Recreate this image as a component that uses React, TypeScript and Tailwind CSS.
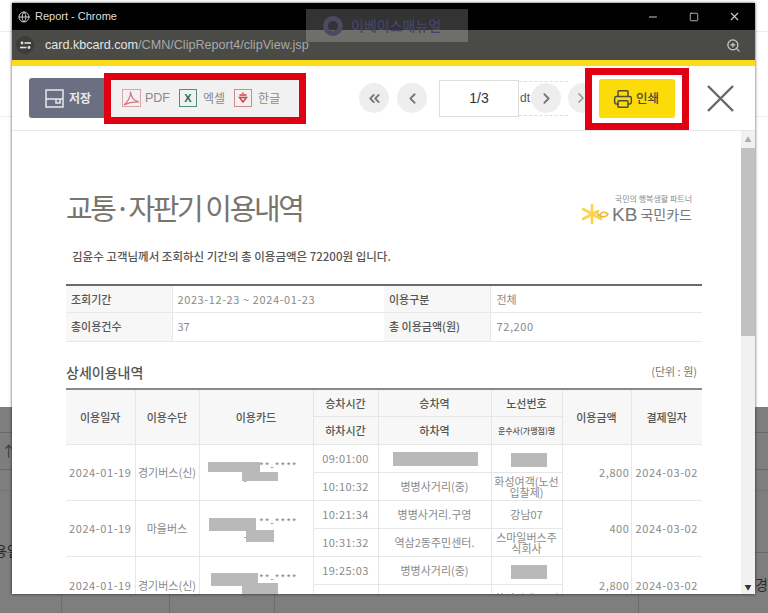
import { Fragment, type ReactNode } from 'react';
import { Printer, Minus, Square, X, Globe, ZoomIn, ChevronLeft, ChevronRight, ChevronsLeft } from 'lucide-react';

function Bar({ className }: { className: string }) {
  return <div className={`absolute bg-[#b9b9b9] ${className}`} />;
}

function HeadCell({ children, className = '', rowSpan }: { children: ReactNode; className?: string; rowSpan?: number }) {
  return (
    <td rowSpan={rowSpan} className={`border-l border-[#e6e6e6] bg-[#f7f7f7] text-center text-[11px] font-medium text-[#555] ${className}`}>
      {children}
    </td>
  );
}

function Cell({ children, className = '', rowSpan }: { children?: ReactNode; className?: string; rowSpan?: number }) {
  return (
    <td rowSpan={rowSpan} className={`relative border-l border-t border-[#e6e6e6] text-center text-[11px] text-[#8a8a8a] ${className}`}>
      {children}
    </td>
  );
}

const rows = [
  { date: '2024-01-19', kind: '경기버스(신)', on: '09:01:00', off: '10:10:32', st1: '', st2: '병병사거리(중)', no: '', co: '화성여객(노선입찰제)', amt: '2,800', pay: '2024-03-02', card: 0 },
  { date: '2024-01-19', kind: '마을버스', on: '10:21:34', off: '10:31:32', st1: '병병사거리.구영', st2: '역삼2동주민센터.', no: '강남07', co: '스마일버스주식회사', amt: '400', pay: '2024-03-02', card: 1 },
  { date: '2024-01-19', kind: '경기버스(신)', on: '19:25:03', off: '', st1: '병병사거리(중)', st2: '', no: '', co: '화성여객(노선', amt: '2,800', pay: '2024-03-02', card: 2 },
];

function Circle({ children }: { children: ReactNode }) {
  return (
    <div className="flex h-[30px] w-[30px] shrink-0 items-center justify-center rounded-full bg-[#eee] text-[#777]">
      {children}
    </div>
  );
}

export default function App() {
  return (
    <div className="relative h-[613px] w-[768px] overflow-hidden bg-[#7e7e7e] font-['Noto_Sans_CJK_KR','Liberation_Sans',sans-serif]">
      {/* 뒤 페이지 */}
      <div className="h-[407px] bg-white">
        <div className="h-[32px] border-b border-[#eee]" />
        <div className="h-[85px] border-b border-[#eee]" />
      </div>
      <div className="h-[26px] border-b border-[#686868]" />
      <div className="h-[37px] border-b border-[#686868] pl-[1px] text-[15px] leading-[36px] text-[#3a3a3a]">↑.</div>
      <div className="h-[21px] border-b border-[#747474]" />
      <div className="flex h-[62px] items-end border-b border-[#686868] pb-[2px] text-[14px] leading-[18px] text-[#2a2a2a]">
        <span className="-mb-[9px] -ml-[6px]">용일</span>
      </div>
      <div className="h-[41px] pt-[22px] pl-[755px] text-[14px] leading-[18px] text-[#2a2a2a]">경</div>
      <div className="grid h-[19px] grid-cols-[62px_108px_105px_364px_1fr]">
        <div className="border-r border-[#6c6c6c]" />
        <div className="border-r border-[#6c6c6c]" />
        <div className="border-r border-[#6c6c6c]" />
        <div className="border-r border-[#6c6c6c]" />
      </div>

      {/* 창 */}
      <div className="absolute left-[12px] top-[3px] flex h-[591px] w-[743px] flex-col overflow-hidden bg-white shadow-[0_0_3px_rgba(0,0,0,0.7)]">
        <div className="flex h-[27px] shrink-0 items-center bg-black pl-[6px] text-[#ddd]">
          <Globe size={12} className="text-[#ccc]" />
          <span className="ml-[5px] font-['Liberation_Sans'] text-[11px]">Report - Chrome</span>
          <div className="ml-auto flex items-center text-[#ccc]">
            <div className="flex w-[41px] justify-center"><Minus size={12} /></div>
            <div className="flex w-[41px] justify-center"><Square size={10} strokeWidth={2} /></div>
            <div className="flex w-[41px] justify-center"><X size={13} /></div>
          </div>
        </div>
        <div className="flex h-[30px] shrink-0 items-center bg-[#4a4a46] pl-[4px] pr-[14px]">
          <div className="flex h-[18px] w-[18px] items-center justify-center rounded-full bg-[#3c3c3a]">
            <svg width="11" height="9" viewBox="0 0 11 9" fill="#e0e0e0">
              <circle cx="2" cy="2" r="1.4" />
              <rect x="4.5" y="1.2" width="6.5" height="1.6" />
              <rect x="0" y="5.7" width="6.5" height="1.6" />
              <circle cx="9" cy="6.5" r="1.4" />
            </svg>
          </div>
          <span className="ml-[11px] font-['Liberation_Sans'] text-[12.6px] text-[#e4e4e4]">
            card.kbcard.com<span className="text-[#a8a8a8]">/CMN/ClipReport4/clipView.jsp</span>
          </span>
          <ZoomIn size={15} className="ml-auto text-[#ccc]" />
        </div>
        <div className="h-[6px] shrink-0 bg-[#fbdc1a]" />

        {/* 툴바 */}
        <div className="flex h-[65px] shrink-0 items-center border-b border-[#e8e8e8] pl-[17px]">
          <div className="flex h-[40px] w-[75px] items-center gap-[5px] rounded-l-[3px] bg-[#6a7082] pl-[16px] text-[#e8e8ec]">
            <svg width="19" height="19" viewBox="0 0 19 19" fill="none" stroke="currentColor" strokeWidth="1.5">
              <rect x="1" y="1" width="17" height="17" />
              <path d="M1 10H18M11 10V14H15V10" />
            </svg>
            <span className="text-[12px] font-bold">저장</span>
          </div>

          {/* 내보내기 */}
          <div className="flex h-[51px] w-[202px] shrink-0 items-center border-[7px] border-[#e00012] bg-[#f1f1f1] pl-[11px] text-[#8a8a8a]">
            <svg width="19" height="18" viewBox="0 0 19 18" fill="none">
              <rect x="0.5" y="0.5" width="18" height="17" stroke="#dba3aa" />
              <path d="M2 16C6 13 9 7 8.5 2.5C9 8 12 12 17 13C12 12.5 7 13.5 2 16Z" stroke="#d5727f" strokeWidth="1.2" />
            </svg>
            <span className="ml-[4px] font-['Liberation_Sans'] text-[12.5px]">PDF</span>
            <div className="ml-[9px] flex h-[18px] w-[18px] items-center justify-center border border-[#4f9077] font-['Liberation_Sans'] text-[11px] font-bold leading-none text-[#2f6a53]">X</div>
            <span className="ml-[6px] text-[12px]">엑셀</span>
            <svg className="ml-[9px]" width="18" height="18" viewBox="0 0 18 18" fill="none">
              <rect x="0.5" y="0.5" width="17" height="17" stroke="#c98a90" />
              <path d="M5.5 6H12.5M9 3.5V5M5.5 8.5H12.5L9 13Z" stroke="#d0404c" strokeWidth="1.4" />
            </svg>
            <span className="ml-[6px] text-[12px]">한글</span>
          </div>

          {/* 페이지 이동 */}
          <div className="ml-[53px]">
            <Circle><ChevronsLeft size={17} strokeWidth={2.6} /></Circle>
          </div>
          <div className="ml-[8px]">
            <Circle><ChevronLeft size={17} strokeWidth={2.6} /></Circle>
          </div>
          <div className="ml-[12px] flex h-[37px] w-[80px] shrink-0 items-center justify-center border border-[#ddd] font-['Liberation_Sans'] text-[14px] text-[#333]">
            1/3
          </div>
          <div className="relative flex items-center pr-[7px]">
            <div className="absolute inset-x-0 h-[35px] border-y border-dashed border-[#ddd]" />
            <span className="w-[12px] shrink-0 pl-[1px] font-['Liberation_Sans'] text-[12px] text-[#555]">dt</span>
            <Circle><ChevronRight size={17} strokeWidth={2.6} /></Circle>
          </div>
          <div className="flex h-[30px] w-[17px] shrink-0 items-center overflow-hidden rounded-l-full bg-[#eee] pl-[5px] text-[#999]">
            <ChevronRight size={16} strokeWidth={2.6} className="shrink-0" />
          </div>

          {/* 인쇄 */}
          <div className="mt-[1px] flex h-[62px] w-[104px] shrink-0 items-center border-[7px] border-[#e00012] bg-white pl-[7px]">
            <div className="flex h-[39px] w-[76px] items-center justify-center gap-[3px] rounded-[3px] bg-[#fbdc09] pr-[2px] text-[#4d4d3a]">
              <Printer size={20} strokeWidth={1.8} />
              <span className="text-[12.5px] font-medium">인쇄</span>
            </div>
          </div>
          <svg className="ml-[18px] shrink-0" width="27" height="27" viewBox="0 0 27 27" stroke="#666" strokeWidth="2.4">
            <path d="M1 1L26 26M26 1L1 26" />
          </svg>
        </div>

        {/* 본문 */}
        <div className="flex min-h-0 flex-1">
          <div className="min-w-0 flex-1 overflow-hidden pl-[54px]">
            <div className="w-[636px]">
              <div className="flex h-[100px] items-start justify-between">
                <h1 className="mt-[57px] whitespace-nowrap text-[29px] font-normal leading-[38px] tracking-[-2.4px] text-[#78746e]">교통·자판기 이용내역</h1>
                <div className="mr-[10px] mt-[63px] flex flex-col items-end">
                  <span className="text-[8px] leading-[10px] text-[#8a8a8a]">국민의 행복생활 파트너</span>
                  <div className="flex items-center gap-[3px]">
                    <svg width="27" height="20" viewBox="0 0 27 20">
                      <g stroke="#fbd34a" strokeWidth="2.6" fill="none" strokeLinecap="round">
                        <path d="M10 1 L10 19" />
                        <path d="M1 5 L19 15" />
                        <path d="M1 15 L16 7" />
                      </g>
                      <path d="M15 9 C18 14 24 14 26 10 C23 7 19 8 18 11" stroke="#e8b93a" strokeWidth="1.6" fill="none" />
                    </svg>
                    <span className="font-['Liberation_Sans'] text-[19px] leading-none text-[#777]">KB</span>
                    <span className="text-[14px] leading-none text-[#777]">국민카드</span>
                  </div>
                </div>
              </div>
              <p className="mt-[17px] pl-[6px] text-[11.5px] font-medium leading-[16px] text-[#555]">
                김윤수 고객님께서 조회하신 기간의 총 이용금액은 72200원 입니다.
              </p>

              {/* 조회 요약 */}
              <table className="mt-[20px] w-[636px] table-fixed border-t-2 border-[#6b6b6b] text-[11px]">
                <tbody>
                  <tr className="h-[27px] border-b border-[#e8e8e8]">
                    <td className="w-[106px] bg-[#f7f7f7] pl-[5px] font-medium text-[#555]">조회기간</td>
                    <td className="w-[212px] border-l border-[#e8e8e8] pl-[5px] tracking-[0.6px] text-[#8a8a8a]">2023-12-23 ~ 2024-01-23</td>
                    <td className="w-[106px] bg-[#f7f7f7] pl-[5px] font-medium text-[#555]">이용구분</td>
                    <td className="border-l border-[#e8e8e8] pl-[6px] text-[#8a8a8a]">전체</td>
                  </tr>
                  <tr className="h-[29px] border-b border-[#e8e8e8]">
                    <td className="bg-[#f7f7f7] pl-[5px] font-medium text-[#555]">총이용건수</td>
                    <td className="border-l border-[#e8e8e8] pl-[5px] text-[#8a8a8a]">37</td>
                    <td className="bg-[#f7f7f7] pl-[5px] font-medium text-[#555]">총 이용금액(원)</td>
                    <td className="border-l border-[#e8e8e8] pl-[6px] tracking-[0.6px] text-[#8a8a8a]">72,200</td>
                  </tr>
                </tbody>
              </table>

              <div className="mt-[20px] flex items-center justify-between pr-[5px]">
                <h2 className="text-[14px] font-medium leading-[20px] text-[#555]">상세이용내역</h2>
                <span className="text-[11px] text-[#777]">(단위 : 원)</span>
              </div>

              {/* 상세 이용내역 */}
              <table className="mt-[6px] w-[636px] table-fixed border-t-2 border-[#8a8a8a]">
                <colgroup>
                  <col className="w-[69px]" />
                  <col className="w-[64px]" />
                  <col className="w-[114px]" />
                  <col className="w-[65px]" />
                  <col className="w-[113px]" />
                  <col className="w-[71px]" />
                  <col className="w-[69px]" />
                  <col className="w-[71px]" />
                </colgroup>
                <tbody>
                  <tr className="h-[28px]">
                    <HeadCell className="!border-l-0" rowSpan={2}>이용일자</HeadCell>
                    <HeadCell rowSpan={2}>이용수단</HeadCell>
                    <HeadCell rowSpan={2}>이용카드</HeadCell>
                    <HeadCell>승차시간</HeadCell>
                    <HeadCell>승차역</HeadCell>
                    <HeadCell>노선번호</HeadCell>
                    <HeadCell rowSpan={2}>이용금액</HeadCell>
                    <HeadCell rowSpan={2}>결제일자</HeadCell>
                  </tr>
                  <tr className="h-[28px]">
                    <HeadCell className="border-t border-t-[#e6e6e6]">하차시간</HeadCell>
                    <HeadCell className="border-t border-t-[#e6e6e6]">하차역</HeadCell>
                    <HeadCell className="whitespace-nowrap border-t border-t-[#e6e6e6] !text-[8px]">운수사(가맹점)명</HeadCell>
                  </tr>
                  {rows.map((r, i) => (
                    <Fragment key={i}>
                      <tr className="h-[28px]">
                        <Cell className="!border-l-0 whitespace-nowrap tracking-[0.6px]" rowSpan={2}>{r.date}</Cell>
                        <Cell className="whitespace-nowrap" rowSpan={2}>{r.kind}</Cell>
                        <Cell rowSpan={2}>
                          <div className="absolute right-[15px] top-[16px] text-[10px] leading-none tracking-[1px]">**-****</div>
                          <div className="absolute left-[44px] top-[30px] text-[10px] leading-none tracking-[1px]">-****</div>
                          {r.card === 0 && <><Bar className="left-[8px] top-[17px] h-[10px] w-[52px]" /><Bar className="left-[42px] top-[27px] h-[9px] w-[36px]" /></>}
                          {r.card === 1 && <><Bar className="left-[9px] top-[17px] h-[13px] w-[47px]" /><Bar className="left-[46px] top-[29px] h-[12px] w-[28px]" /></>}
                          {r.card === 2 && <><Bar className="left-[11px] top-[16px] h-[13px] w-[47px]" /><Bar className="left-[42px] top-[26px] h-[12px] w-[36px]" /></>}
                        </Cell>
                        <Cell className="tracking-[0.5px]">{r.on}</Cell>
                        <Cell>{r.st1 || <Bar className="left-[14px] top-[7px] h-[14px] w-[85px]" />}</Cell>
                        <Cell>{r.no || <Bar className="left-[19px] top-[8px] h-[14px] w-[36px]" />}</Cell>
                        <Cell className="pr-[1px] text-right tracking-[0.6px]" rowSpan={2}>{r.amt}</Cell>
                        <Cell className="whitespace-nowrap tracking-[0.6px]" rowSpan={2}>{r.pay}</Cell>
                      </tr>
                      <tr className="h-[28px]">
                        <Cell className="tracking-[0.5px]">{r.off}</Cell>
                        <Cell>{r.st2}</Cell>
                        <Cell className="break-all leading-[11px]">{r.co}</Cell>
                      </tr>
                    </Fragment>
                  ))}
                </tbody>
              </table>
            </div>
          </div>

          {/* 스크롤바 */}
          <div className="flex w-[14px] shrink-0 flex-col bg-[#f1f1f1]">
            <div className="h-[17px] text-center text-[7px] leading-[17px] text-[#aaa]">▲</div>
            <div className="h-[188px] bg-[#c1c1c1]" />
            <div className="mt-auto pb-[3px] text-center text-[7px] leading-none text-[#333]">▼</div>
          </div>
        </div>
      </div>

      {/* 워터마크 */}
      <div className="absolute left-[306px] top-[9px] flex h-[33px] w-[162px] items-center bg-white/20 pl-[17px]">
        <div className="h-[20px] w-[20px] rounded-full border-[5px] border-[#4a4a60]" />
        <span className="ml-[8px] text-[14px] font-medium text-[#44446a]">이베이스매뉴얼</span>
      </div>
    </div>
  );
}
